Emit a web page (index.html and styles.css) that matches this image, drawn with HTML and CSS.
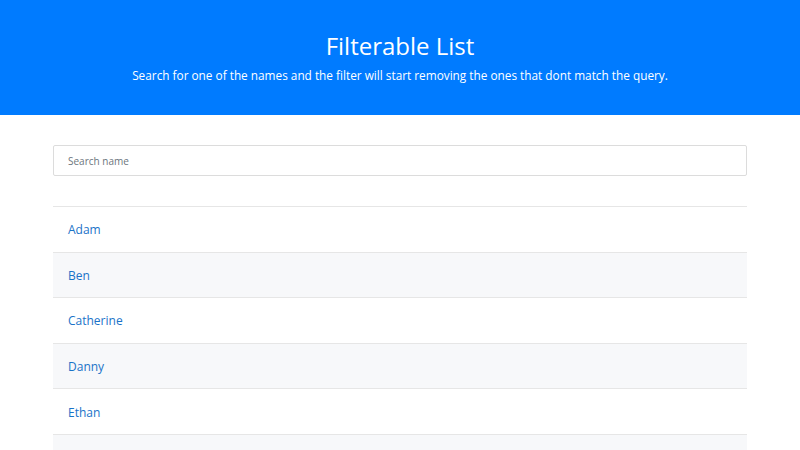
FILE: index.html
```html
<!DOCTYPE html>
<html lang="en">
<head>
<meta charset="utf-8">
<title>Filterable List</title>
<link rel="stylesheet" href="styles.css">
</head>
<body>
<header class="hero">
  <h1 class="hero-title">Filterable List</h1>
  <p class="hero-lead">Search for one of the names and the filter will start removing the ones that dont match the query.</p>
</header>
<main class="container">
  <input class="search" type="text" placeholder="Search name">
  <ul class="names">
    <li class="name"><a href="#">Adam</a></li>
    <li class="name"><a href="#">Ben</a></li>
    <li class="name"><a href="#">Catherine</a></li>
    <li class="name"><a href="#">Danny</a></li>
    <li class="name"><a href="#">Ethan</a></li>
    <li class="name"><a href="#">Fiona</a></li>
  </ul>
</main>
</body>
</html>
```
FILE: styles.css
```css
html, body {
  margin: 0;
  padding: 0;
  background: #fff;
  font-family: "Open Sans", "Noto Sans", sans-serif;
  overflow: hidden;
  height: 450px;
}
.hero {
  background: #007bff;
  color: #fff;
  text-align: center;
  height: 115px;
  box-sizing: border-box;
  padding-top: 30px;
}
.hero-title {
  margin: 0;
  font-weight: 400;
  font-size: 24px;
  line-height: 32px;
}
.hero-lead {
  margin: 4px 0 0;
  font-size: 11.8px;
  line-height: 18px;
}
.container {
  margin: 0 53px;
  padding-top: 30px;
}
.search {
  display: block;
  box-sizing: border-box;
  width: 100%;
  height: 31px;
  border: 1px solid #dcdcdc;
  border-radius: 2px;
  padding: 0 14px;
  font-family: inherit;
  font-size: 10px;
  color: #495057;
  outline: none;
}
.search::placeholder {
  color: #6c757d;
}
.names {
  list-style: none;
  margin: 30px 0 0;
  padding: 0;
  border-top: 1px solid #e6e6e6;
}
.name {
  height: 45.6px;
  box-sizing: border-box;
  border-bottom: 1px solid #e6e6e6;
  display: flex;
  align-items: center;
  padding: 2px 15px 0;
}
.name:nth-child(even) {
  background: #f7f8fa;
}
.name a {
  color: #1a73c8;
  text-decoration: none;
  font-size: 12px;
  line-height: 16px;
}
```
